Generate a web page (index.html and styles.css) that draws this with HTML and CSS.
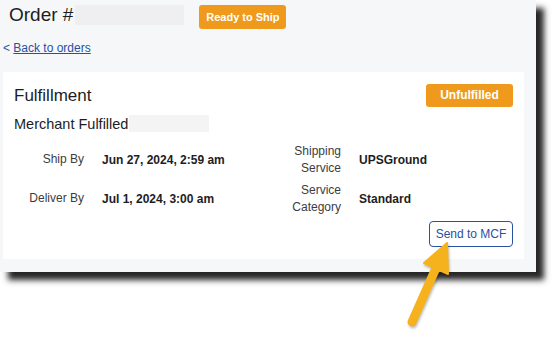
FILE: index.html
```html
<!DOCTYPE html>
<html lang="en">
<head>
    <meta charset="UTF-8">
    <meta name="viewport" content="width=device-width, initial-scale=1.0">
    <title>Order</title>
    <link rel="stylesheet" href="styles.css">
</head>
<body>
    <div class="window">
        <div class="header">
            <h1>Order #<span class="blur blur-order"></span></h1>
            <span class="badge">Ready to Ship</span>
        </div>
        <div class="back">&lt; <a href="#">Back to orders</a></div>

        <div class="card">
            <div class="card-top">
                <h2>Fulfillment</h2>
                <span class="badge">Unfulfilled</span>
            </div>
            <h3>Merchant Fulfilled<span class="blur blur-merchant"></span></h3>

            <div class="details">
                <div class="col">
                    <div class="row">
                        <span class="label">Ship By</span>
                        <span class="value">Jun 27, 2024, 2:59 am</span>
                    </div>
                    <div class="row">
                        <span class="label">Deliver By</span>
                        <span class="value">Jul 1, 2024, 3:00 am</span>
                    </div>
                </div>
                <div class="col">
                    <div class="row">
                        <span class="label">Shipping<br>Service</span>
                        <span class="value">UPSGround</span>
                    </div>
                    <div class="row">
                        <span class="label">Service<br>Category</span>
                        <span class="value">Standard</span>
                    </div>
                </div>
            </div>

            <div class="actions">
                <button class="btn-outline">Send to MCF</button>
            </div>
        </div>
    </div>

    <!-- callout arrow -->
    <svg class="arrow" viewBox="390 228 80 110" width="80" height="110">
        <line x1="436" y1="268" x2="412" y2="322" stroke="#f5b21c" stroke-width="9" stroke-linecap="round"/>
        <polygon points="447,243 448,274 424,263" fill="#f5b21c" stroke="#f5b21c" stroke-width="2" stroke-linejoin="round"/>
    </svg>
</body>
</html>
```

FILE: styles.css
```css
*{
    margin: 0;
    padding: 0;
    box-sizing: border-box;
}
body{
    font-family: "Liberation Sans", Arial, sans-serif;
    background: #fff;
    color: #1d1d1f;
    width: 554px;
    height: 346px;
    overflow: hidden;
}

.window{
    width: 536px;
    height: 272px;
    background: #f6f7f9;
    box-shadow: 8px 8px 6px rgba(0, 0, 0, 0.85);
    padding-top: 4px;
}
.header{
    display: flex;
    align-items: center;
    height: 22px;
    padding-left: 9px;
    margin-bottom: 15px;
}
.header h1{
    font-size: 19px;
    font-weight: normal;
    display: flex;
    align-items: center;
}
.blur{
    display: inline-block;
    background: #efeff1;
}
.blur-order{
    width: 109px;
    height: 20px;
    margin-left: 2px;
}
.badge{
    background: #ef9a1c;
    color: #fff;
    font-size: 11px;
    font-weight: bold;
    border-radius: 3px;
    height: 24px;
    line-height: 24px;
    text-align: center;
}
.header .badge{
    width: 87px;
    margin-left: 15px;
    margin-top: 4px;
}

.back{
    padding-left: 3px;
    font-size: 12px;
    color: #2a4fa3;
    margin-bottom: 17px;
}
.back a{
    color: #2a4fa3;
}

.card{
    margin-left: 3px;
    width: 521px;
    height: 187px;
    background: #fff;
    padding: 12px 11px 0 11px;
}
.card-top{
    display: flex;
    justify-content: space-between;
    align-items: center;
}
.card-top h2{
    font-size: 17px;
    font-weight: normal;
}
.card-top .badge{
    width: 87px;
    font-size: 12px;
    height: 23px;
    line-height: 23px;
}
.card h3{
    font-size: 14.5px;
    font-weight: normal;
    display: flex;
    align-items: center;
    margin-top: 8px;
}
.blur-merchant{
    width: 80px;
    height: 17px;
    margin-left: 1px;
    background: #f4f4f5;
}

.details{
    display: flex;
    margin-top: 10px;
}
.details .col{
    display: flex;
    flex-direction: column;
    gap: 4px;
}
.details .col:first-child{
    width: 257px;
}
.row{
    display: flex;
    align-items: center;
    height: 35px;
}
.label{
    width: 70px;
    text-align: right;
    font-size: 12px;
    line-height: 17px;
    color: #3c3c3e;
    margin-right: 18px;
}
.value{
    font-size: 12px;
    font-weight: bold;
}

.actions{
    display: flex;
    justify-content: flex-end;
    margin-top: 5px;
}
.btn-outline{
    width: 84px;
    height: 26px;
    border: 1px solid #2a4fa3;
    border-radius: 4px;
    background: #fff;
    color: #2a4fa3;
    font-family: "Liberation Sans", Arial, sans-serif;
    font-size: 12px;
}

.arrow{
    position: absolute;
    left: 390px;
    top: 228px;
    filter: drop-shadow(1px 2px 1px rgba(0, 0, 0, 0.25));
}
```
